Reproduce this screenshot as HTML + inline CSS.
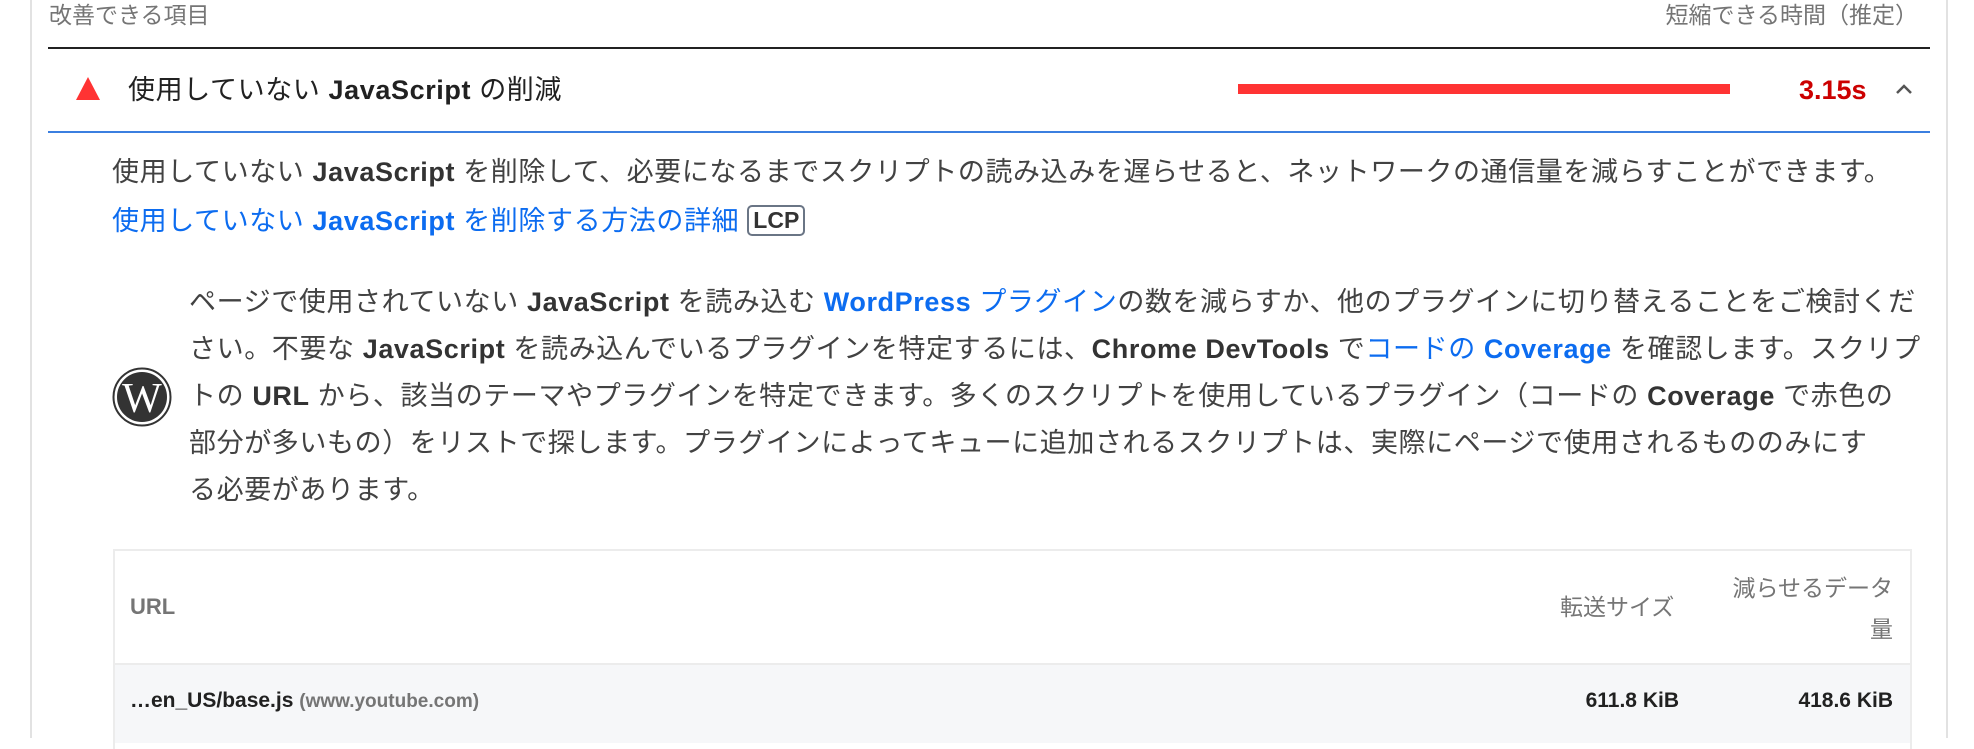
<!DOCTYPE html>
<html><head><meta charset="utf-8"><style>
*{margin:0;padding:0;box-sizing:border-box}
body{width:1974px;height:738px;background:#fff;position:relative;overflow:hidden;font-family:"Liberation Sans","Noto Sans CJK JP",sans-serif;color:#424242}
.a{position:absolute;white-space:nowrap}
b{font-weight:700;color:#333}
.bl{color:#0c6cf0}
.bl b{color:#0c6cf0}
.t{font-size:27px;line-height:47px;letter-spacing:0.6px}
</style></head><body>
<div class="a" style="left:30px;top:0;width:2px;height:738px;background:#e2e2e2"></div>
<div class="a" style="left:1946px;top:0;width:2px;height:738px;background:#e2e2e2"></div>
<div class="a" style="left:49px;top:0;font-size:23px;line-height:30px;color:#757575">改善できる項目</div>
<div class="a" style="right:56px;top:0;font-size:23px;line-height:30px;color:#757575">短縮できる時間（推定）</div>
<div class="a" style="left:48px;top:47px;width:1882px;height:2px;background:#212121"></div>
<div class="a" style="left:76px;top:77px;width:0;height:0;border-left:12px solid transparent;border-right:12px solid transparent;border-bottom:23px solid #f33"></div>
<div class="a" style="left:128px;top:70px;font-size:27px;line-height:40px;color:#212121;letter-spacing:0.6px">使用していない <b style="color:#212121">JavaScript</b> の削減</div>
<div class="a" style="left:1238px;top:84px;width:492px;height:10px;background:#f33"></div>
<div class="a" style="left:1799px;top:70px;font-size:27px;line-height:40px;color:#c00;font-weight:700">3.15s</div>
<svg class="a" style="left:1894px;top:82px" width="20" height="14" viewBox="0 0 20 14"><path d="M3 11 L10 4 L17 11" fill="none" stroke="#555" stroke-width="2.5"/></svg>
<div class="a" style="left:48px;top:131px;width:1882px;height:2px;background:#3b7fe0"></div>
<div class="a t" style="left:112px;top:149px">使用していない <b>JavaScript</b> を削除して、必要になるまでスクリプトの読み込みを遅らせると、ネットワークの通信量を減らすことができます。</div>
<div class="a t bl" style="left:112px;top:198px">使用していない <b>JavaScript</b> を削除する方法の詳細 <span style="display:inline-block;border:2px solid #6a7585;border-radius:5px;color:#333;font-weight:700;font-size:23px;line-height:27px;padding:0 4px;vertical-align:2px;letter-spacing:0">LCP</span></div>
<svg class="a" style="left:112px;top:367px" width="60" height="60" viewBox="0 0 60 60"><circle cx="30" cy="30" r="28.5" fill="none" stroke="#333" stroke-width="2"/><circle cx="30" cy="30" r="25" fill="#333"/><text x="30" y="45" text-anchor="middle" font-family="Liberation Serif,serif" font-size="42" fill="#fff">W</text></svg>
<div class="a t" style="left:189px;top:279px">ページで使用されていない <b>JavaScript</b> を読み込む <span class="bl"><b>WordPress</b> プラグイン</span>の数を減らすか、他のプラグインに切り替えることをご検討くだ</div>
<div class="a t" style="left:189px;top:326px">さい。不要な <b>JavaScript</b> を読み込んでいるプラグインを特定するには、<b>Chrome DevTools</b> で<span class="bl">コードの <b>Coverage</b></span> を確認します。スクリプ</div>
<div class="a t" style="left:189px;top:373px">トの <b>URL</b> から、該当のテーマやプラグインを特定できます。多くのスクリプトを使用しているプラグイン（コードの <b>Coverage</b> で赤色の</div>
<div class="a t" style="left:189px;top:420px">部分が多いもの）をリストで探します。プラグインによってキューに追加されるスクリプトは、実際にページで使用されるもののみにす</div>
<div class="a t" style="left:189px;top:467px">る必要があります。</div>
<div class="a" style="left:113px;top:549px;width:1799px;height:200px;border:2px solid #ececec;border-bottom:none"></div>
<div class="a" style="left:115px;top:663px;width:1795px;height:80px;background:#f6f7f9;border-top:2px solid #ececec"></div>
<div class="a" style="left:130px;top:592px;font-size:22px;line-height:30px;color:#757575;font-weight:700">URL</div>
<div class="a" style="left:1560px;top:592px;font-size:23px;line-height:30px;color:#757575">転送サイズ</div>
<div class="a" style="right:81px;top:568px;font-size:23px;line-height:41px;color:#757575;text-align:right;white-space:normal;width:175px">減らせるデータ量</div>
<div class="a" style="left:130px;top:686px;font-size:21px;line-height:30px;color:#212121"><b style="color:#212121">…en_US/base.js</b> <span style="color:#757575;font-size:19px;font-weight:700">(www.youtube.com)</span></div>
<div class="a" style="right:295px;top:686px;font-size:21px;line-height:30px;font-weight:700;color:#212121">611.8 KiB</div>
<div class="a" style="right:81px;top:686px;font-size:21px;line-height:30px;font-weight:700;color:#212121">418.6 KiB</div>
</body></html>
